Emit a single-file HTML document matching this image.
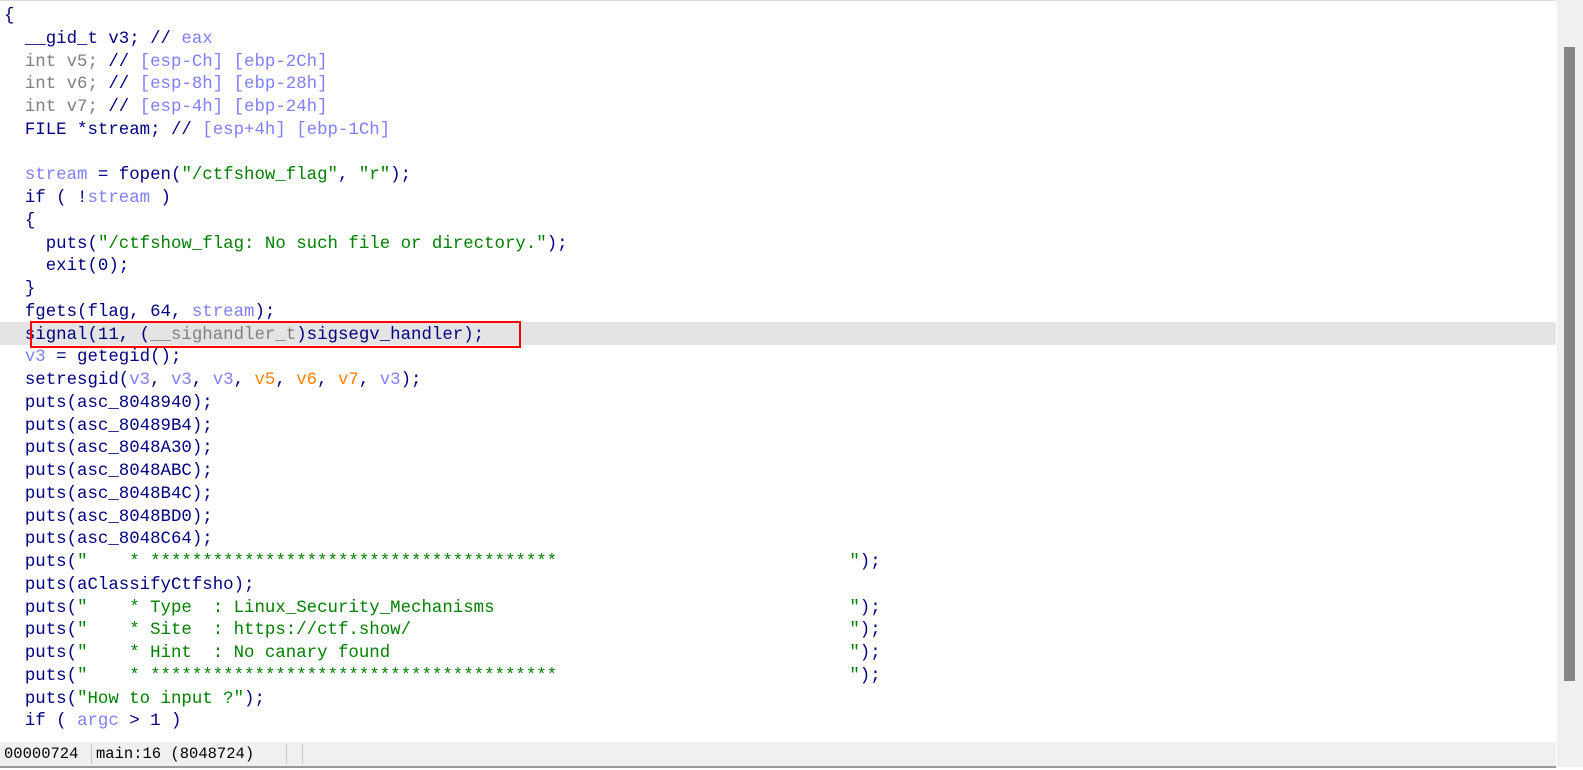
<!DOCTYPE html>
<html><head><meta charset="utf-8"><style>
html,body{margin:0;padding:0;width:1583px;height:770px;overflow:hidden;background:#fff;}
#code{position:absolute;left:0;top:0;width:1556px;height:740px;border-top:1px solid #ddd;}
pre{position:absolute;left:4px;top:5px;margin:0;font-family:"Liberation Mono",monospace;font-size:17.4px;line-height:22.75px;color:#000080;white-space:pre;}
.hl{position:absolute;left:0;top:321px;width:1556px;height:23px;background:#e4e4e4;}
.box{position:absolute;left:30px;top:320px;width:487px;height:23px;border:2px solid #f00;}
.g{color:#808080}.c{color:#8080ff}.s{color:#008000}.o{color:#ff8000}
#sb{position:absolute;left:1557px;top:0;width:26px;height:767px;background:#f0f0f0;}
#th{position:absolute;left:1564px;top:47px;width:11px;height:634px;background:#858585;}
#st{position:absolute;left:0;top:742px;width:1556px;height:24px;background:#f0f0f0;border-bottom:2px solid #999;font-family:"Liberation Mono",monospace;font-size:15.5px;line-height:24px;color:#000;}
#st span{position:absolute;top:0;}
.sep{position:absolute;top:2px;width:1px;height:20px;background:#c8c8c8;}
</style></head><body>
<div id="code">
<div class="hl"></div>
<pre>{
  __gid_t v3; // <span class="c">eax</span>
  <span class="g">int v5;</span> // <span class="c">[esp-Ch] [ebp-2Ch]</span>
  <span class="g">int v6;</span> // <span class="c">[esp-8h] [ebp-28h]</span>
  <span class="g">int v7;</span> // <span class="c">[esp-4h] [ebp-24h]</span>
  FILE *stream; // <span class="c">[esp+4h] [ebp-1Ch]</span>

  <span class="c">stream</span> = fopen(<span class="s">"/ctfshow_flag"</span>, <span class="s">"r"</span>);
  if ( !<span class="c">stream</span> )
  {
    puts(<span class="s">"/ctfshow_flag: No such file or directory."</span>);
    exit(0);
  }
  fgets(flag, 64, <span class="c">stream</span>);
  signal(11, (<span class="g">__sighandler_t</span>)sigsegv_handler);
  <span class="c">v3</span> = getegid();
  setresgid(<span class="c">v3</span>, <span class="c">v3</span>, <span class="c">v3</span>, <span class="o">v5</span>, <span class="o">v6</span>, <span class="o">v7</span>, <span class="c">v3</span>);
  puts(asc_8048940);
  puts(asc_80489B4);
  puts(asc_8048A30);
  puts(asc_8048ABC);
  puts(asc_8048B4C);
  puts(asc_8048BD0);
  puts(asc_8048C64);
  puts(<span class="s">"    * ***************************************                            "</span>);
  puts(aClassifyCtfsho);
  puts(<span class="s">"    * Type  : Linux_Security_Mechanisms                                  "</span>);
  puts(<span class="s">"    * Site  : https://ctf.show/                                          "</span>);
  puts(<span class="s">"    * Hint  : No canary found                                            "</span>);
  puts(<span class="s">"    * ***************************************                            "</span>);
  puts(<span class="s">"How to input ?"</span>);
  if ( <span class="c">argc</span> &gt; 1 )</pre>
<div class="box"></div>
</div>
<div id="st"><span style="left:4px">00000724</span><div class="sep" style="left:91px"></div><span style="left:96px">main:16 (8048724)</span><div class="sep" style="left:286px"></div><div class="sep" style="left:302px"></div></div>
<div id="sb"></div><div id="th"></div>
</body></html>
